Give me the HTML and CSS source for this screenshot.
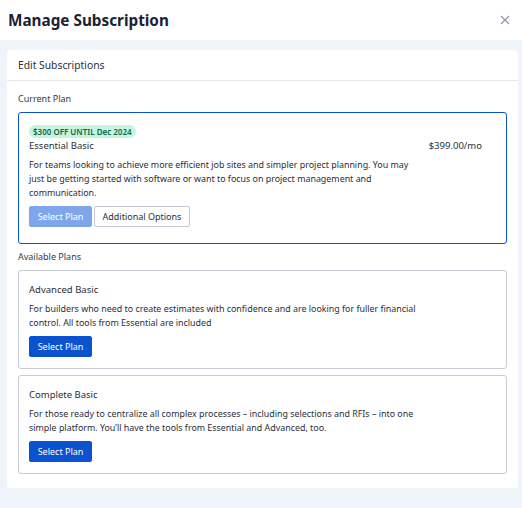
FILE: index.html
```html
<!DOCTYPE html>
<html>
<head>
<meta charset="utf-8">
<link rel="stylesheet" href="styles.css">
</head>
<body>
<div class="modal">
  <header class="modal-header">
    <h1 class="title">Manage Subscription</h1>
    <button class="close" aria-label="Close">
      <svg width="10" height="10" viewBox="0 0 10 10"><path d="M1 1L9 9M9 1L1 9" stroke="#8a94a6" stroke-width="1.1" fill="none"/></svg>
    </button>
  </header>
  <div class="modal-body">
    <section class="card">
      <div class="card-head">Edit Subscriptions</div>
      <div class="card-content">
        <div class="section-label">Current Plan</div>
        <div class="plan plan-current">
          <div class="plan-main">
            <span class="badge">$300 OFF UNTIL Dec 2024</span>
            <div class="plan-name">Essential Basic</div>
            <p class="plan-desc">For teams looking to achieve more efficient job sites and simpler project planning. You may just be getting started with software or want to focus on project management and communication.</p>
            <div class="actions">
              <button class="btn btn-primary btn-disabled">Select Plan</button>
              <button class="btn btn-secondary">Additional Options</button>
            </div>
          </div>
          <div class="price">$399.00/mo</div>
        </div>
        <div class="section-label">Available Plans</div>
        <div class="plan">
          <div class="plan-main">
            <div class="plan-name">Advanced Basic</div>
            <p class="plan-desc">For builders who need to create estimates with confidence and are looking for fuller financial control. All tools from Essential are included</p>
            <div class="actions">
              <button class="btn btn-primary">Select Plan</button>
            </div>
          </div>
        </div>
        <div class="plan">
          <div class="plan-main">
            <div class="plan-name">Complete Basic</div>
            <p class="plan-desc">For those ready to centralize all complex processes – including selections and RFIs – into one simple platform. You’ll have the tools from Essential and Advanced, too.</p>
            <div class="actions">
              <button class="btn btn-primary">Select Plan</button>
            </div>
          </div>
        </div>
      </div>
    </section>
  </div>
</div>
</body>
</html>
```
FILE: styles.css
```css
* { box-sizing: border-box; }
html, body { margin: 0; padding: 0; background: #ffffff; }
body {
  font-family: "Noto Sans", "Open Sans", sans-serif;
  color: #2a2f38;
  width: 522px;
  height: 508px;
  overflow: hidden;
}
.modal { display: flex; flex-direction: column; height: 508px; }
.modal-header {
  height: 40px;
  display: flex;
  align-items: center;
  justify-content: space-between;
  padding: 0 10px 0 8px;
}
.title {
  margin: 0;
  font-size: 15.3px;
  font-weight: 700;
  color: #1a2233;
}
.close {
  border: none;
  background: none;
  padding: 0;
  width: 14px;
  height: 14px;
  display: flex;
  align-items: center;
  justify-content: center;
}
.modal-body {
  flex: 1;
  background: #eff3fa;
  padding: 10px 4px 20px 7px;
}
.card {
  background: #ffffff;
  border-radius: 3px;
  height: 100%;
}
.card-head {
  height: 31px;
  display: flex;
  align-items: center;
  padding-left: 11px;
  font-size: 10.3px;
  color: #2a2f38;
  border-bottom: 1px solid #e3e7ee;
}
.card-content {
  padding: 12px 11px 0 11px;
  display: flex;
  flex-direction: column;
}
.section-label {
  font-size: 9px;
  color: #333a44;
  line-height: 12px;
  margin-bottom: 7px;
}
.plan {
  border: 1px solid #c7ccd5;
  border-radius: 3px;
  padding: 12px 10px 11px 10px;
  display: flex;
  justify-content: space-between;
  margin-bottom: 6px;
}
.plan-current {
  border-color: #0b52d0;
  padding-top: 12px;
  padding-bottom: 16px;
  margin-bottom: 7px;
}
.plan-main { display: flex; flex-direction: column; align-items: flex-start; width: 405px; }
.badge {
  background: #c5f5de;
  color: #14653f;
  font-size: 8px;
  font-weight: 600;
  line-height: 13px;
  padding: 0 4px;
  border-radius: 7px;
  margin-bottom: 1px;
}
.plan-name {
  font-size: 9.5px;
  line-height: 14px;
  color: #2a2f38;
}
.price {
  font-size: 9.5px;
  line-height: 14px;
  margin-top: 14px;
  margin-right: 14px;
  color: #2a2f38;
}
.plan-desc {
  margin: 5px 0 6px 0;
  width: 392px;
  font-size: 8.9px;
  line-height: 14px;
  color: #2a2f38;
}
.actions { display: flex; gap: 2px; }
.btn {
  font-family: inherit;
  font-size: 9px;
  height: 21px;
  border-radius: 2px;
  padding: 0;
  white-space: nowrap;
  cursor: pointer;
}
.btn-primary {
  background: #0b52d0;
  border: 1px solid #0b52d0;
  color: #ffffff;
  width: 63px;
}
.btn-disabled {
  background: #7fa6ea;
  border-color: #7fa6ea;
}
.btn-secondary {
  background: #ffffff;
  border: 1px solid #c2c8d2;
  color: #2a2f38;
  width: 96px;
}
```
